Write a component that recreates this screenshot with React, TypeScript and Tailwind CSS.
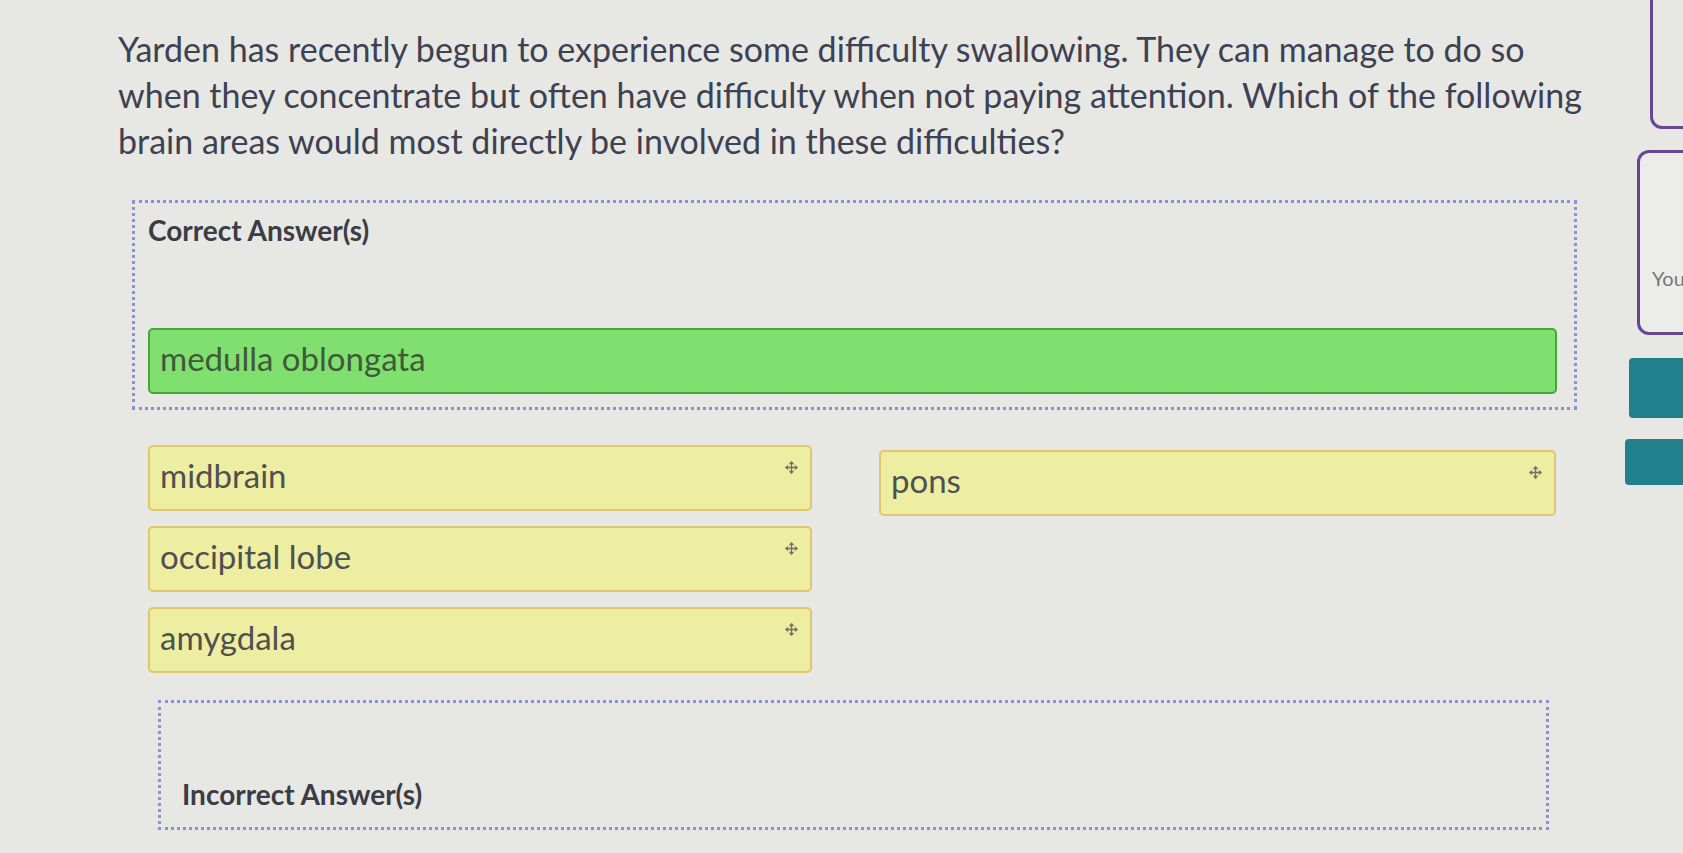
import * as React from "react";
import { Move } from "lucide-react";

const font = { fontFamily: "Lato, 'Noto Sans', sans-serif" };

const DragItem = ({ label }: { label: string }) => (
  <div className="relative flex items-center h-[66px] rounded-[5px] border-2 border-[#e2c56c] bg-[#eeeea3] pl-[10px] text-[33px] text-[#4f5050]">
    <span className="-mt-[4px]">{label}</span>
    <Move className="absolute top-[14px] right-[12px] w-[13px] h-[13px] text-[#6f6f6a]" strokeWidth={2.5} />
  </div>
);

const App = () => {
  return (
    <div className="w-[1683px] h-[853px] overflow-hidden bg-[#e7e7e4] flex" style={font}>
      <div className="flex-1 pl-[118px] pt-[26px]">
        <p className="text-[34px] leading-[46px] text-[#3d4152] whitespace-nowrap">
          Yarden has recently begun to experience some difficulty swallowing. They can manage to do so
          <br />
          when they concentrate but often have difficulty when not paying attention. Which of the following
          <br />
          brain areas would most directly be involved in these difficulties?
        </p>

        <div className="mt-[36px] ml-[14px] w-[1445px] h-[210px] border-[3px] border-dotted border-[#8b90d9] flex flex-col pl-[13px] pr-[17px] pb-[13px]">
          <h2 className="mt-[6px] text-[28px] font-bold text-[#3b3c46]">Correct Answer(s)</h2>
          <div className="mt-auto flex items-center h-[66px] rounded-[5px] border-2 border-[#47a63b] bg-[#7fe06f] pl-[10px] text-[33px] text-[#3f5a3a]">
            <span className="-mt-[4px]">medulla oblongata</span>
          </div>
        </div>

        <div className="mt-[35px] flex gap-[67px] pl-[30px]">
          <div className="flex flex-col gap-[15px] w-[664px]">
            <DragItem label="midbrain" />
            <DragItem label="occipital lobe" />
            <DragItem label="amygdala" />
          </div>
          <div className="w-[677px] pt-[5px]">
            <DragItem label="pons" />
          </div>
        </div>

        <div className="mt-[27px] ml-[40px] w-[1391px] h-[130px] border-[3px] border-dotted border-[#8b90d9] flex flex-col justify-end pl-[21px] pb-[12px]">
          <h2 className="text-[28px] font-bold text-[#3b3c46]">Incorrect Answer(s)</h2>
        </div>
      </div>

      <div className="w-[58px] shrink-0 flex flex-col">
        <div className="-mt-[10px] ml-[25px] w-[120px] h-[139px] shrink-0 border-[3px] border-[#6a4591] rounded-bl-[12px]" />
        <div className="mt-[21px] ml-[12px] w-[140px] h-[185px] shrink-0 border-[3px] border-[#6a4591] rounded-[12px] bg-[#ecece9] pl-[12px] pt-[110px]">
          <span className="text-[20px] text-[#77777a]">You</span>
        </div>
        <div className="mt-[23px] ml-[4px] w-[120px] h-[60px] shrink-0 rounded-[4px] bg-[#22808d]" />
        <div className="mt-[21px] w-[120px] h-[46px] shrink-0 rounded-[4px] bg-[#22808d]" />
      </div>
    </div>
  );
};

export default App;
